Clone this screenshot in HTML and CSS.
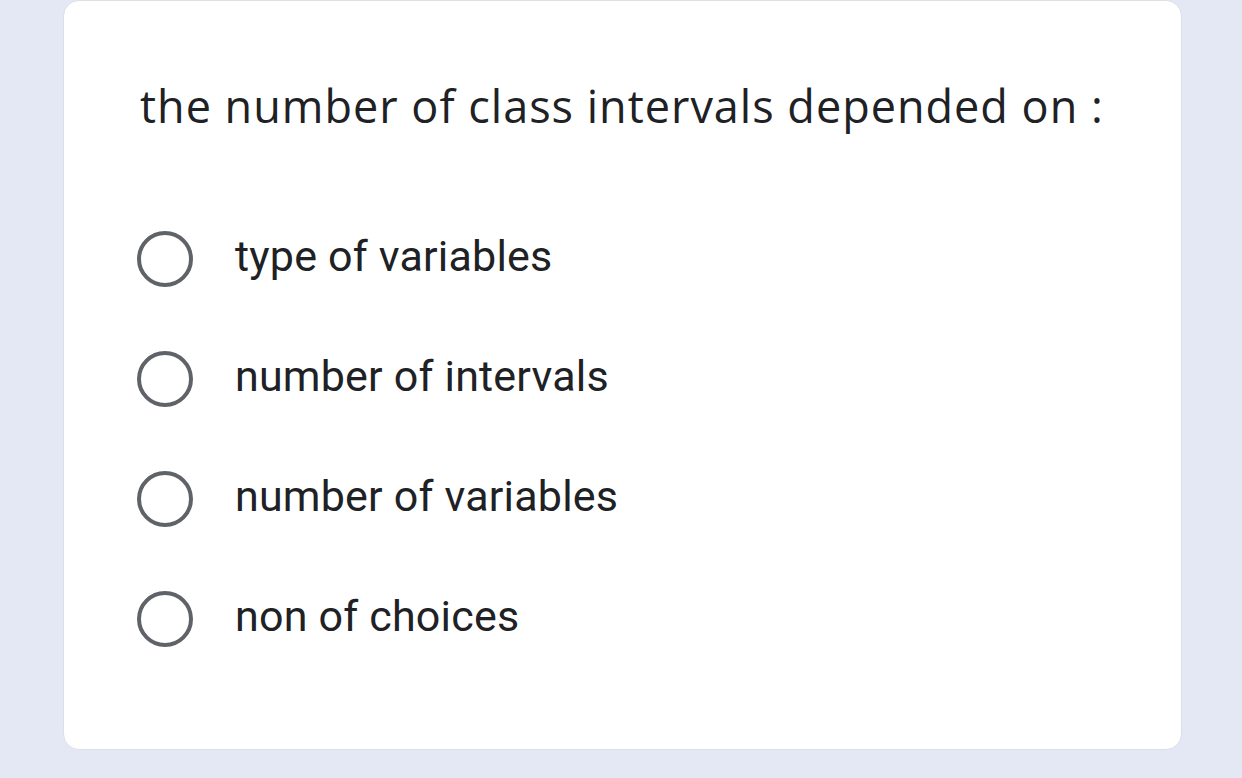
FILE: index.html
```html
<!DOCTYPE html>
<html>
<head>
<meta charset="utf-8">
<link rel="stylesheet" href="styles.css">
</head>
<body>
<div class="page">
  <div class="card">
    <div class="question">the number of class intervals depended on :</div>
    <div class="options">
      <div class="option"><span class="radio"></span><span class="label">type of variables</span></div>
      <div class="option"><span class="radio"></span><span class="label">number of intervals</span></div>
      <div class="option"><span class="radio"></span><span class="label">number of variables</span></div>
      <div class="option"><span class="radio"></span><span class="label">non of choices</span></div>
    </div>
  </div>
</div>
</body>
</html>
```
FILE: styles.css
```css
html, body {
  margin: 0;
  padding: 0;
  background: #e3e8f4;
  width: 1242px;
  height: 778px;
  overflow: hidden;
}
.page {
  padding: 0 60px 0 63px;
}
.card {
  box-sizing: border-box;
  width: 1119px;
  height: 750px;
  background: #ffffff;
  border-radius: 16px;
  border: 1px solid #dcdfe6;
  padding: 75px 0 0 76px;
}
.question {
  font-family: "Open Sans", "Noto Sans", sans-serif;
  font-size: 45px;
  color: #202124;
  line-height: 60px;
  letter-spacing: 1px;
}
.options {
  margin-top: 95px;
  display: flex;
  flex-direction: column;
  gap: 64px;
}
.option {
  display: flex;
  align-items: center;
  height: 56px;
}
.radio {
  box-sizing: border-box;
  width: 56px;
  height: 56px;
  border: 4.5px solid #5f6368;
  border-radius: 50%;
  margin-left: -3px;
  flex-shrink: 0;
}
.label {
  margin-left: 42px;
  padding-bottom: 7px;
  font-family: Roboto, "Liberation Sans", sans-serif;
  font-size: 43px;
  letter-spacing: 0.2px;
  color: #202124;
}
```
